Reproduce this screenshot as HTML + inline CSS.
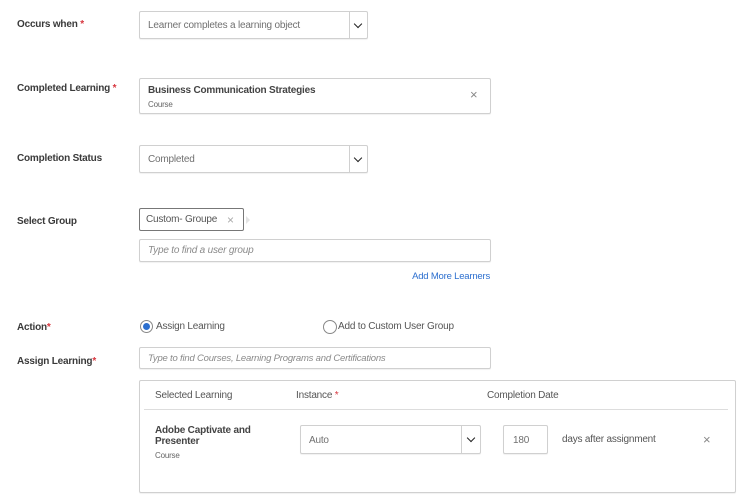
<!DOCTYPE html>
<html><head><meta charset="utf-8"><style>
*{box-sizing:border-box;margin:0;padding:0}
body{width:750px;height:502px;background:#fff;font-family:"Liberation Sans",sans-serif;position:relative;overflow:hidden;color:#4b4b4b;letter-spacing:-0.2px}
.a{position:absolute;white-space:nowrap}
.lbl{font-size:10px;font-weight:bold;color:#3a3a3a;transform:translateY(-45%)}
.req{color:#d7373f}
.box{position:absolute;border:1px solid #d0d0d0;border-radius:2px;background:#fff;box-shadow:0 1px 1px rgba(0,0,0,.06)}
.sel .dv{position:absolute;top:0;bottom:0;border-left:1px solid #d0d0d0}
.t{font-size:10px;color:#707070}
.ph{font-size:10px;color:#8a8a8a;font-style:italic}
.chev{position:absolute;width:6px;height:6px;border-right:1.6px solid #222;border-bottom:1.6px solid #222;transform:rotate(45deg)}
.x{font-size:13px;color:#888;line-height:1}
.h{font-size:10px;color:#555}
</style></head><body>
<div class="a lbl" style="left:17px;top:24px">Occurs when <span class="req">*</span></div>
<div class="box sel" style="left:139px;top:11px;width:229px;height:28px"><div class="dv" style="left:209px"></div>
<div class="a t" style="left:8px;top:8px">Learner completes a learning object</div>
<div class="chev" style="left:215px;top:9px"></div></div>

<div class="a lbl" style="left:17px;top:88px">Completed Learning <span class="req">*</span></div>
<div class="box" style="left:139px;top:78px;width:352px;height:36px">
<div class="a" style="left:8px;top:6px;font-size:10px;font-weight:bold;color:#444">Business Communication Strategies</div>
<div class="a" style="left:8px;top:21px;font-size:8px;color:#666">Course</div>
<div class="a x" style="left:330px;top:9px">×</div></div>

<div class="a lbl" style="left:17px;top:158px">Completion Status</div>
<div class="box sel" style="left:139px;top:145px;width:229px;height:28px"><div class="dv" style="left:209px"></div>
<div class="a t" style="left:8px;top:8px">Completed</div>
<div class="chev" style="left:215px;top:9px"></div></div>

<div class="a lbl" style="left:17px;top:221px">Select Group</div>
<div class="box" style="left:139px;top:208px;width:105px;height:23px;border-color:#777;box-shadow:none">
<div class="a" style="left:6px;top:5px;font-size:10px;color:#555">Custom- Groupe</div>
<div class="a x" style="left:87px;top:5px;font-size:12px;color:#aaa">×</div></div>
<div class="a" style="left:246px;top:216px;width:0;height:0;border-left:4px solid #e4e4e4;border-top:4px solid transparent;border-bottom:4px solid transparent"></div>
<div class="box" style="left:139px;top:239px;width:352px;height:23px">
<div class="a ph" style="left:8px;top:5px">Type to find a user group</div></div>
<div class="a" style="right:260px;top:271px;font-size:9.5px;color:#2c6fcf">Add More Learners</div>

<div class="a lbl" style="left:17px;top:327px">Action<span class="req">*</span></div>
<div class="a" style="left:140px;top:320px;width:13px;height:13px;border:1px solid #888;border-radius:50%"><div style="position:absolute;left:2px;top:2px;width:7px;height:7px;border-radius:50%;background:#2c6fcf"></div></div>
<div class="a" style="left:156px;top:321px;font-size:10px;color:#555">Assign Learning</div>
<div class="a" style="left:323px;top:320px;width:14px;height:14px;border:1px solid #888;border-radius:50%"></div>
<div class="a" style="left:338px;top:321px;font-size:10px;color:#555">Add to Custom User Group</div>

<div class="a lbl" style="left:17px;top:361px">Assign Learning<span class="req">*</span></div>
<div class="box" style="left:139px;top:347px;width:352px;height:22px">
<div class="a ph" style="left:8px;top:5px;font-size:9.5px">Type to find Courses, Learning Programs and Certifications</div></div>

<div class="box" style="left:139px;top:380px;width:597px;height:113px">
<div class="a h" style="left:15px;top:9px">Selected Learning</div>
<div class="a h" style="left:156px;top:9px">Instance <span class="req">*</span></div>
<div class="a h" style="left:347px;top:9px">Completion Date</div>
<div class="a" style="left:4px;top:28px;width:584px;border-top:1px solid #ddd"></div>
<div class="a" style="left:15px;top:44px;font-size:10px;font-weight:bold;color:#444;line-height:11px;white-space:normal;width:110px">Adobe Captivate and Presenter</div>
<div class="a" style="left:15px;top:70px;font-size:8px;color:#666">Course</div>
<div class="box sel" style="left:160px;top:44px;width:181px;height:29px"><div class="dv" style="left:160px"></div>
<div class="a t" style="left:8px;top:9px">Auto</div>
<div class="chev" style="left:167px;top:9px"></div></div>
<div class="box" style="left:363px;top:44px;width:45px;height:29px"><div class="a t" style="left:9px;top:9px">180</div></div>
<div class="a" style="left:422px;top:53px;font-size:10px;color:#555">days after assignment</div>
<div class="a x" style="left:563px;top:52px">×</div>
</div>
</body></html>
